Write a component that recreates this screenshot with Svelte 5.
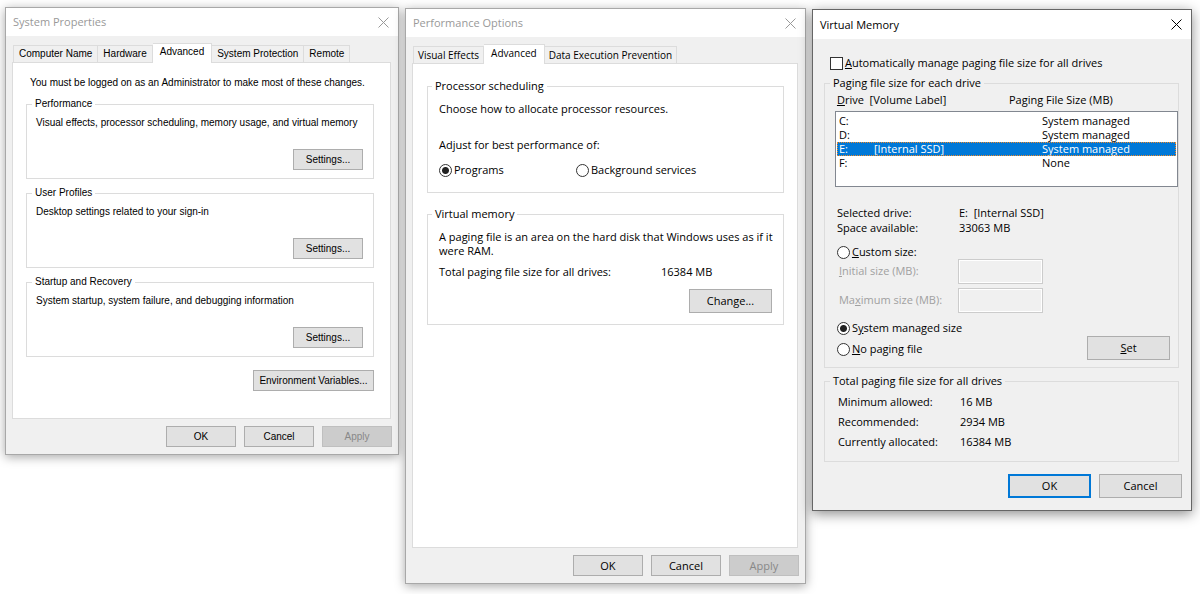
<script>
	const systemTabs = ['Computer Name', 'Hardware', 'Advanced', 'System Protection', 'Remote'];
	const performanceTabs = ['Visual Effects', 'Advanced', 'Data Execution Prevention'];

	const sections = [
		{
			title: 'Performance',
			text: 'Visual effects, processor scheduling, memory usage, and virtual memory'
		},
		{ title: 'User Profiles', text: 'Desktop settings related to your sign-in' },
		{
			title: 'Startup and Recovery',
			text: 'System startup, system failure, and debugging information'
		}
	];

	const drives = [
		{ letter: 'C:', label: '', size: 'System managed' },
		{ letter: 'D:', label: '', size: 'System managed' },
		{ letter: 'E:', label: '[Internal SSD]', size: 'System managed' },
		{ letter: 'F:', label: '', size: 'None' }
	];

	const totals = [
		['Minimum allowed:', '16 MB'],
		['Recommended:', '2934 MB'],
		['Currently allocated:', '16384 MB']
	];

	let systemTab = $state('Advanced');
	let performanceTab = $state('Advanced');
	let adjustFor = $state('programs');
	let autoManage = $state(false);
	let selected = $state('E:');
	let sizeMode = $state('system');
</script>

{#snippet titlebar(title)}
	<header class="titlebar">
		<h2>{title}</h2>
		<button class="close" aria-label="Close {title}">
			<svg viewBox="0 0 11 11" width="11" height="11">
				<path d="M.5 .5l10 10M10.5 .5l-10 10" fill="none" stroke="currentColor" />
			</svg>
		</button>
	</header>
{/snippet}

{#snippet tabs(names, current, pick)}
	<div class="tabs" role="tablist">
		{#each names as name}
			<button
				class="tab"
				class:active={name === current}
				role="tab"
				aria-selected={name === current}
				onclick={() => pick(name)}>{name}</button
			>
		{/each}
	</div>
{/snippet}

<main class="desktop">
	<section class="window system">
		{@render titlebar('System Properties')}
		<div class="body">
			{@render tabs(systemTabs, systemTab, (name) => (systemTab = name))}
			<div class="page">
				<p class="intro">
					You must be logged on as an Administrator to make most of these changes.
				</p>
				{#each sections as section}
					<fieldset>
						<legend>{section.title}</legend>
						<p>{section.text}</p>
						<button class="btn">Settings...</button>
					</fieldset>
				{/each}
				<button class="btn env">Environment Variables...</button>
			</div>
		</div>
		<footer>
			<button class="btn">OK</button>
			<button class="btn">Cancel</button>
			<button class="btn" disabled>Apply</button>
		</footer>
	</section>

	<section class="window performance">
		{@render titlebar('Performance Options')}
		<div class="body">
			{@render tabs(performanceTabs, performanceTab, (name) => (performanceTab = name))}
			<div class="page">
				<fieldset>
					<legend>Processor scheduling</legend>
					<p>Choose how to allocate processor resources.</p>
					<p class="adjust">Adjust for best performance of:</p>
					<div class="choices">
						<label>
							<input type="radio" name="adjust" value="programs" bind:group={adjustFor} />
							Programs
						</label>
						<label>
							<input type="radio" name="adjust" value="background" bind:group={adjustFor} />
							Background services
						</label>
					</div>
				</fieldset>
				<fieldset>
					<legend>Virtual memory</legend>
					<p>A paging file is an area on the hard disk that Windows uses as if it were RAM.</p>
					<div class="total">
						<span>Total paging file size for all drives:</span>
						<span>16384 MB</span>
					</div>
					<button class="btn large">Change...</button>
				</fieldset>
			</div>
		</div>
		<footer>
			<button class="btn">OK</button>
			<button class="btn">Cancel</button>
			<button class="btn" disabled>Apply</button>
		</footer>
	</section>

	<section class="window memory">
		{@render titlebar('Virtual Memory')}
		<div class="body">
			<label class="auto">
				<input type="checkbox" bind:checked={autoManage} />
				<span><u>A</u>utomatically manage paging file size for all drives</span>
			</label>

			<fieldset class="drives">
				<legend>Paging file size for each drive</legend>
				<div class="list-head">
					<span><u>D</u>rive&nbsp; [Volume Label]</span>
					<span>Paging File Size (MB)</span>
				</div>
				<div class="list" role="listbox" aria-label="Drives">
					{#each drives as drive}
						<button
							class="row"
							class:selected={drive.letter === selected}
							role="option"
							aria-selected={drive.letter === selected}
							onclick={() => (selected = drive.letter)}
						>
							<span>{drive.letter}</span>
							<span>{drive.label}</span>
							<span>{drive.size}</span>
						</button>
					{/each}
				</div>

				<dl class="info">
					<dt>Selected drive:</dt>
					<dd>E:&nbsp; [Internal SSD]</dd>
					<dt>Space available:</dt>
					<dd>33063 MB</dd>
				</dl>

				<label class="mode">
					<input type="radio" name="size" value="custom" bind:group={sizeMode} />
					<span><u>C</u>ustom size:</span>
				</label>
				<div class="sizes">
					<label for="initial"><u>I</u>nitial size (MB):</label>
					<input id="initial" type="text" disabled={sizeMode !== 'custom'} />
					<label for="maximum">Ma<u>x</u>imum size (MB):</label>
					<input id="maximum" type="text" disabled={sizeMode !== 'custom'} />
				</div>
				<div class="bottom">
					<div class="modes">
						<label class="mode">
							<input type="radio" name="size" value="system" bind:group={sizeMode} />
							<span>S<u>y</u>stem managed size</span>
						</label>
						<label class="mode">
							<input type="radio" name="size" value="none" bind:group={sizeMode} />
							<span><u>N</u>o paging file</span>
						</label>
					</div>
					<button class="btn large"><span><u>S</u>et</span></button>
				</div>
			</fieldset>

			<fieldset class="totals">
				<legend>Total paging file size for all drives</legend>
				<dl>
					{#each totals as [name, value]}
						<dt>{name}</dt>
						<dd>{value}</dd>
					{/each}
				</dl>
			</fieldset>
		</div>
		<footer>
			<button class="btn large default">OK</button>
			<button class="btn large">Cancel</button>
		</footer>
	</section>
</main>

<style>
	:global(body) {
		margin: 0;
		background: #fff;
	}

	.desktop {
		display: flex;
		align-items: flex-start;
		gap: 6px;
		padding: 7px 8px 10px 5px;
		font: 11px/14px 'Open Sans', 'Noto Sans', sans-serif;
		color: #000;
	}

	.desktop :is(h2, p, dl, dd, fieldset) {
		margin: 0;
		padding: 0;
	}

	.desktop :is(button, input) {
		box-sizing: border-box;
		margin: 0;
		font: inherit;
		color: inherit;
	}

	/* windows */
	.window {
		box-sizing: border-box;
		min-width: 0;
		border: 1px solid #a8a8a8;
		background: #f0f0f0;
		box-shadow: 0 2px 10px rgba(0, 0, 0, 0.35);
	}

	.system {
		flex: 394 1 0;
	}

	.performance {
		flex: 401 1 0;
		margin-top: 1px;
	}

	.memory {
		flex: 380 1 0;
		margin-top: 2px;
		border-color: #666;
		box-shadow: 0 3px 12px rgba(0, 0, 0, 0.45);
	}

	.titlebar {
		display: flex;
		align-items: center;
		justify-content: space-between;
		height: 28px;
		padding: 0 9px 0 7px;
		background: #fff;
		color: #999;
	}

	.memory .titlebar {
		height: 29px;
		color: #000;
	}

	h2 {
		font-size: 11px;
		font-weight: 400;
	}

	.close {
		display: flex;
		padding: 0;
		border: 0;
		background: none;
	}

	.body {
		padding: 7px 7px 0 6px;
	}

	footer {
		display: flex;
		justify-content: flex-end;
		gap: 8px;
		padding: 7px 6px;
	}

	/* tabs */
	.tabs {
		display: flex;
		align-items: flex-end;
		height: 19px;
		padding-left: 1px;
	}

	.desktop .tab {
		height: 17px;
		padding: 0 5px;
		border: 1px solid #dcdcdc;
		border-width: 1px 1px 0 0;
		background: #f0f0f0;
		line-height: 16px;
		white-space: nowrap;
	}

	.desktop .tab:first-child {
		border-left-width: 1px;
	}

	.desktop .tab.active {
		z-index: 1;
		height: 20px;
		margin-bottom: -1px;
		padding: 0 7px 3px;
		background: #fff;
	}

	.page {
		display: flex;
		flex-direction: column;
		border: 1px solid #dcdcdc;
		background: #fff;
	}

	/* group boxes */
	.desktop fieldset {
		display: flex;
		flex-direction: column;
		min-width: 0;
		border: 1px solid #dcdcdc;
	}

	legend {
		margin-left: 5px;
		padding: 0 3px;
	}

	.btn {
		display: flex;
		align-items: center;
		justify-content: center;
		align-self: flex-end;
		width: 70px;
		height: 21px;
		padding: 0;
		border: 1px solid #adadad;
		background: #e1e1e1;
		white-space: nowrap;
	}

	.desktop .btn:disabled {
		border-color: #bfbfbf;
		background: #ccc;
		color: #888;
	}

	.btn.large {
		width: 83px;
		height: 24px;
	}

	.btn.default {
		border: 2px solid #0078d7;
	}

	/* System Properties */
	.system .body,
	.system footer {
		font-family: 'Liberation Sans', Arial, sans-serif;
		font-size: 10px;
	}

	.system .page {
		gap: 7px;
		padding: 13px 16px 27px 13px;
	}

	.desktop .intro {
		padding-left: 4px;
		white-space: nowrap;
	}

	.desktop .system fieldset {
		padding: 5px 10px 8px 0;
	}

	.desktop .system fieldset p {
		padding-left: 9px;
		white-space: nowrap;
	}

	.desktop .system fieldset .btn {
		margin-top: 19px;
	}

	.desktop .system .env {
		width: 121px;
		margin-top: 6px;
	}

	/* Performance Options */
	.desktop .performance .tab {
		font-size: 10px;
	}

	.desktop .performance .tab:not(.active) {
		padding: 0 4px;
	}

	.performance .page {
		box-sizing: border-box;
		gap: 14px;
		min-height: 485px;
		padding: 15px 13px 15px 14px;
	}

	.desktop .performance fieldset {
		padding: 9px 4px 11px 11px;
	}

	.performance legend {
		margin-left: -7px;
	}

	.desktop .performance .adjust {
		margin-top: 22px;
	}

	.choices {
		display: grid;
		grid-template-columns: 137px 1fr;
		margin: 11px 0 4px;
	}

	.total {
		display: grid;
		grid-template-columns: 222px 1fr;
		margin: 7px 0 10px;
	}

	.desktop .performance fieldset .btn {
		margin-right: 7px;
	}

	/* Virtual Memory */
	.memory .body {
		padding: 17px 12px 0 11px;
	}

	label {
		display: flex;
		align-items: center;
		gap: 2px;
	}

	.auto {
		padding-left: 6px;
	}

	input[type='radio'],
	input[type='checkbox'] {
		flex: none;
		appearance: none;
		width: 13px;
		height: 13px;
		border: 1px solid #333;
		background: #fff;
	}

	input[type='radio'] {
		border-radius: 50%;
	}

	input[type='radio']:checked {
		background: radial-gradient(circle, #222 3px, #fff 4px);
	}

	input[type='checkbox']:checked {
		background: #333;
		box-shadow: inset 0 0 0 2px #fff;
	}

	.desktop .drives {
		margin-top: 6px;
		padding: 3px 0 7px 10px;
	}

	.drives legend {
		margin-left: -5px;
	}

	.list-head {
		display: grid;
		grid-template-columns: 172px 1fr;
		padding-left: 2px;
	}

	.list {
		box-sizing: border-box;
		height: 76px;
		margin-top: 4px;
		padding: 2px 1px;
		border: 1px solid #828790;
		background: #fff;
	}

	.row {
		display: grid;
		grid-template-columns: 35px 1fr 132px;
		width: 100%;
		height: 14px;
		padding: 0 2px;
		border: 0;
		background: none;
		text-align: left;
	}

	.desktop .row.selected {
		background: #0078d7;
		outline: 1px dotted #f08a28;
		outline-offset: -1px;
		color: #fff;
	}

	dl {
		display: grid;
		grid-template-columns: 122px 1fr;
	}

	.desktop .info {
		margin: 18px 0 10px;
		padding-left: 2px;
		line-height: 15px;
	}

	.mode {
		padding-left: 2px;
	}

	.sizes {
		display: grid;
		grid-template-columns: 119px 85px;
		gap: 4px 0;
		padding-left: 4px;
		color: #a0a0a0;
	}

	.sizes label {
		display: block;
		padding-top: 5px;
	}

	.sizes input {
		height: 25px;
		border: 1px solid #ccc;
		background: #f0f0f0;
		box-shadow: inset 0 0 0 1px #fff;
	}

	.bottom {
		display: flex;
		align-items: flex-end;
		justify-content: space-between;
		margin-top: 8px;
		padding-right: 8px;
	}

	.modes {
		display: grid;
		gap: 7px;
		padding-bottom: 4px;
	}

	.desktop .totals {
		margin-top: 6px;
		padding: 4px 10px 9px 13px;
		line-height: 20px;
	}

	.totals legend {
		margin-left: -8px;
		line-height: 14px;
	}

	.memory footer {
		padding: 12px 9px;
	}
</style>
